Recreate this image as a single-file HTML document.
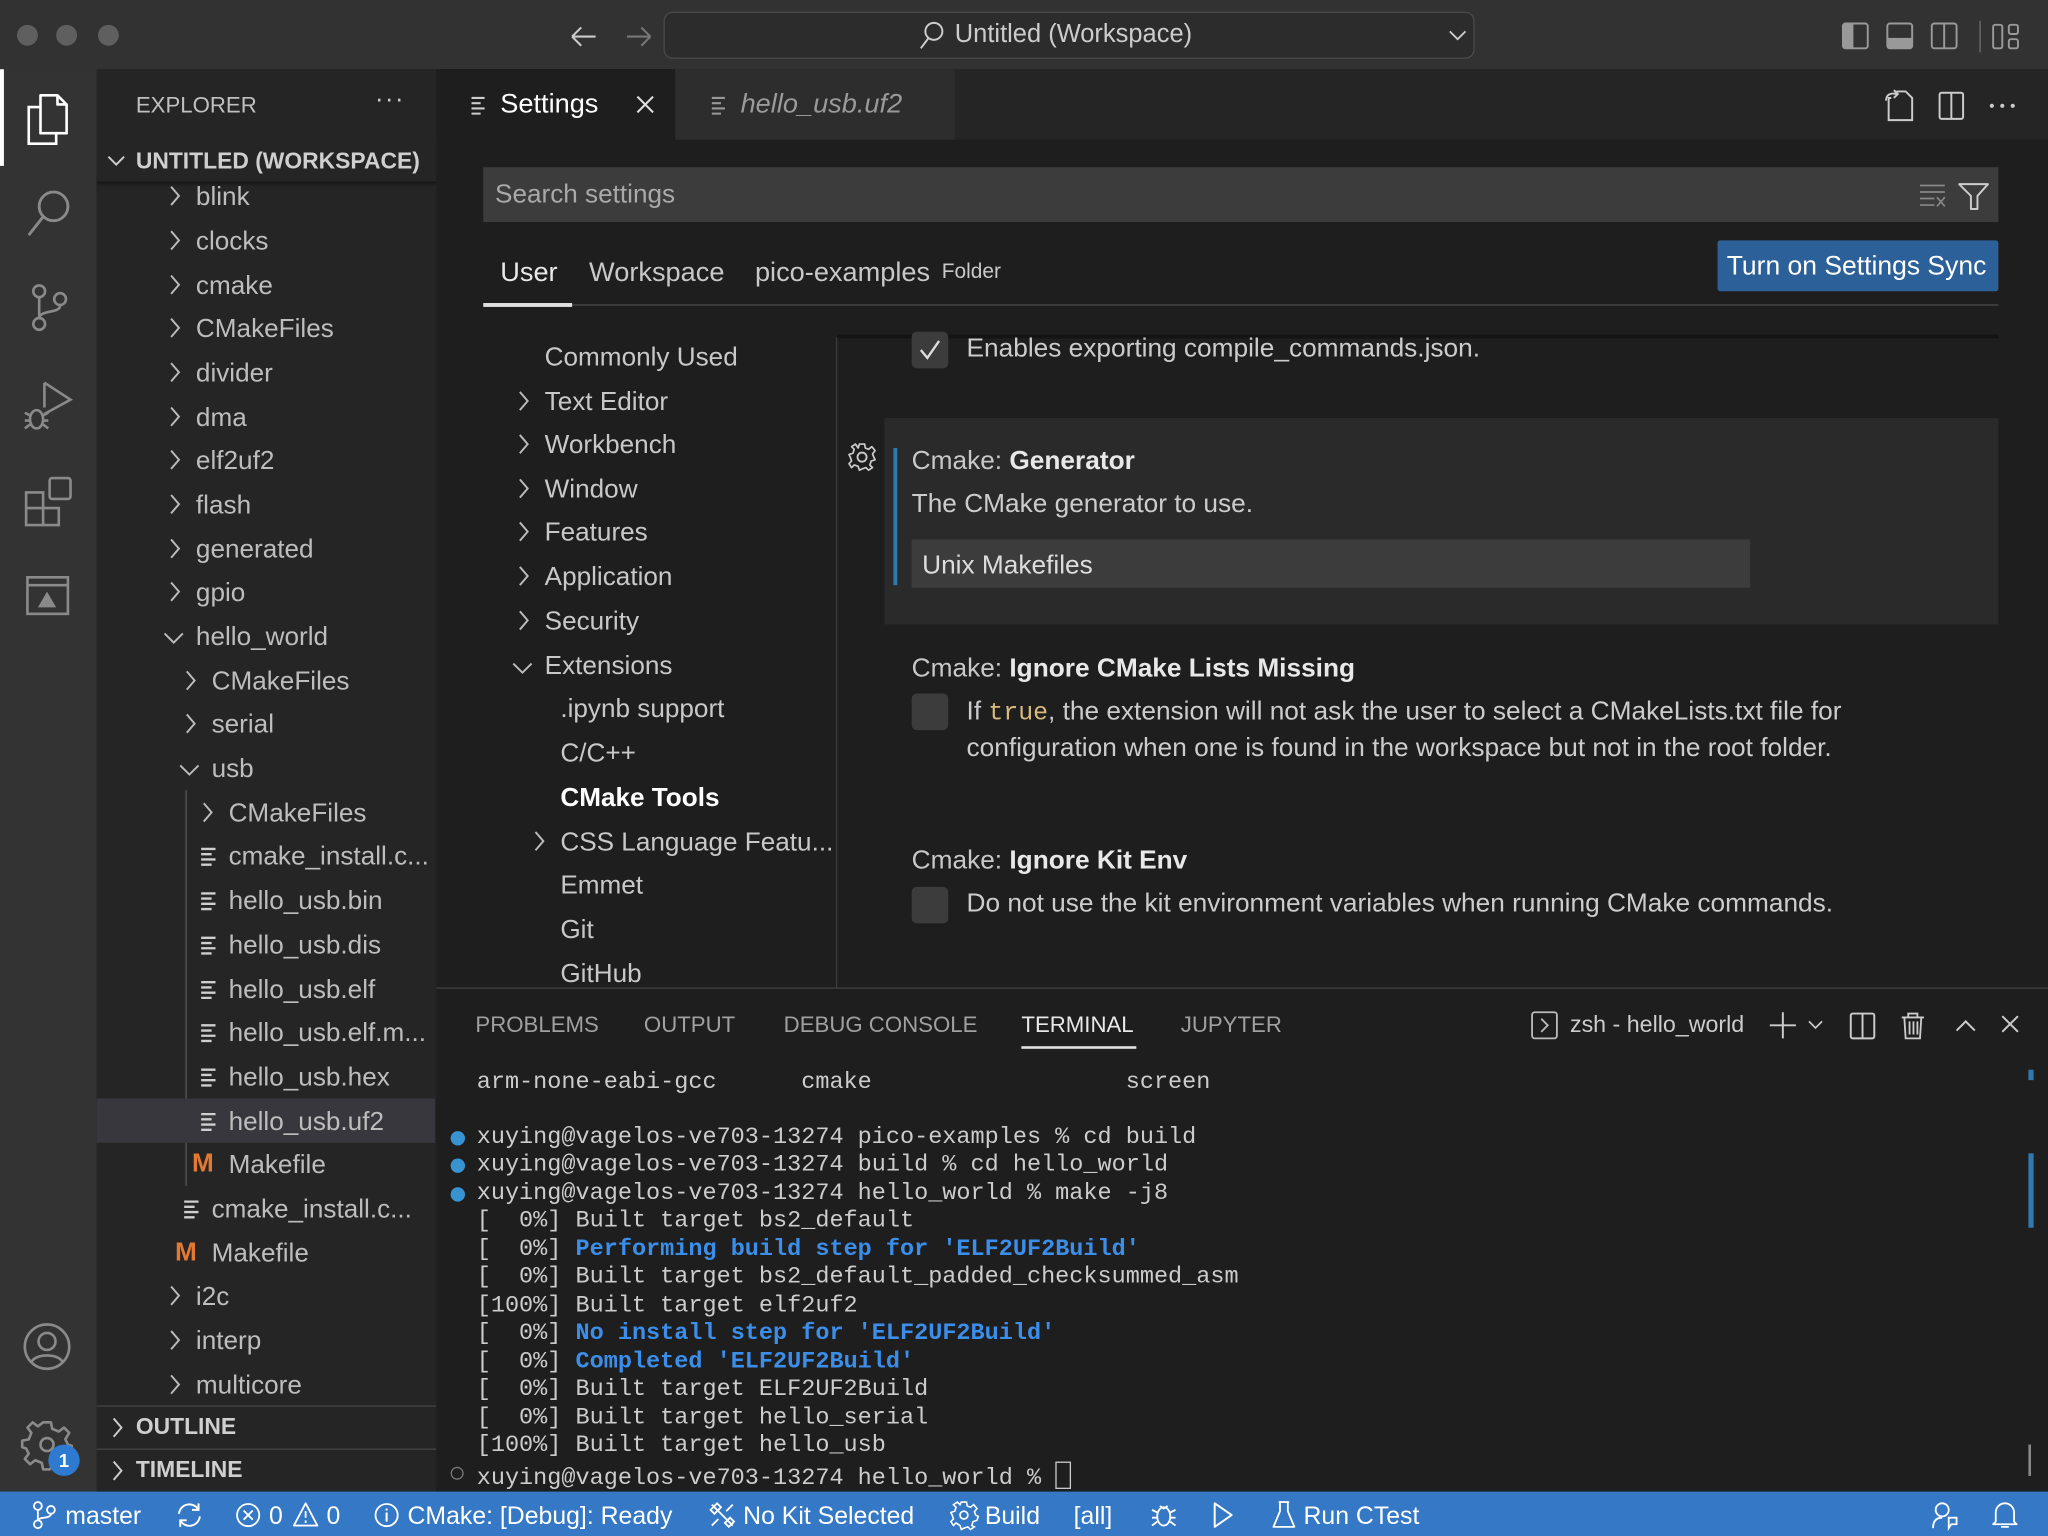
<!DOCTYPE html>
<html><head><meta charset="utf-8">
<style>
html,body{margin:0;padding:0;width:2048px;height:1536px;overflow:hidden;background:#1e1e1e;}
#w{position:absolute;left:0;top:0;width:1568px;height:1176px;transform:scale(1.306122);transform-origin:0 0;font-family:"Liberation Sans",sans-serif;color:#cccccc;background:#1e1e1e;overflow:hidden;}
.a{position:absolute;}
.t{position:absolute;white-space:nowrap;line-height:1;}
.row{position:absolute;left:74px;width:259px;height:33.7px;}
.row .tx{position:absolute;top:7px;font-size:20px;color:#bdbdbd;white-space:nowrap;}
.row svg{position:absolute;top:8px;}
.toc{position:absolute;font-size:20px;color:#c8c8c8;white-space:nowrap;}
.term{position:absolute;left:365px;font-family:"Liberation Mono",monospace;font-size:18px;color:#cccccc;white-space:pre;line-height:1;}
.b{color:#3b8eea;font-weight:bold;}
.sb{position:absolute;top:1151px;font-size:19px;color:#fff;white-space:nowrap;}
.st{font-size:20.1px !important;}
svg{overflow:visible;}
</style></head><body><div id="w">
<div class="a" style="left:0;top:0;width:1568px;height:53px;background:#323233;"></div>
<div class="a" style="left:13px;top:19px;width:16px;height:16px;border-radius:50%;background:#5f5f5f"></div>
<div class="a" style="left:43px;top:19px;width:16px;height:16px;border-radius:50%;background:#5f5f5f"></div>
<div class="a" style="left:75px;top:19px;width:16px;height:16px;border-radius:50%;background:#5f5f5f"></div>
<svg class="a" style="left:436px;top:18px" width="60" height="20"><path d="M2 10H20M2 10L9 3M2 10L9 17" stroke="#ccc" stroke-width="1.6" fill="none"/><path d="M44 10H62M62 10L55 3M62 10L55 17" stroke="#777" stroke-width="1.6" fill="none"/></svg>
<div class="a" style="left:508px;top:9px;width:619px;height:34px;border:1px solid #4a4a4a;border-radius:7px;background:#2c2c2d;"></div>
<svg class="a" style="left:702px;top:16px" width="22" height="22"><circle cx="13" cy="8" r="6.5" stroke="#ccc" stroke-width="1.5" fill="none"/><path d="M9 13L3 21" stroke="#ccc" stroke-width="1.5"/></svg>
<div class="t" style="left:731px;top:17px;font-size:19.5px;color:#ccc">Untitled (Workspace)</div>
<svg class="a" style="left:1109px;top:22px" width="14" height="10"><path d="M1 2L7 8L13 2" stroke="#ccc" stroke-width="1.4" fill="none"/></svg>
<svg class="a" style="left:1410px;top:16px" width="140" height="24"><rect x="1" y="2" width="19" height="19" rx="2" stroke="#999" stroke-width="1.5" fill="none"/><rect x="1" y="2" width="8" height="19" fill="#999"/><rect x="35" y="2" width="19" height="19" rx="2" stroke="#999" stroke-width="1.5" fill="none"/><rect x="35" y="13" width="19" height="8" fill="#999"/><rect x="69" y="2" width="19" height="19" rx="2" stroke="#999" stroke-width="1.5" fill="none"/><path d="M78.5 2V21" stroke="#999" stroke-width="1.5"/><path d="M106 0V24" stroke="#666" stroke-width="1.2"/><rect x="116" y="3" width="7" height="18" rx="1.5" stroke="#999" stroke-width="1.5" fill="none"/><rect x="128" y="3" width="7" height="7" rx="1.5" stroke="#999" stroke-width="1.5" fill="none"/><rect x="128" y="14" width="7" height="7" rx="1.5" stroke="#999" stroke-width="1.5" fill="none"/></svg>

<div class="a" style="left:0;top:53px;width:74px;height:1089px;background:#333333;"></div>
<div class="a" style="left:0;top:53px;width:3px;height:74px;background:#fff;"></div>
<svg class="a" style="left:18px;top:70px" width="40" height="40"><path d="M13 3H26L33 10V32H13Z M26 3V10H33" stroke="#fff" stroke-width="2" fill="none" stroke-linejoin="round"/><path d="M13 12H4V40H25V32" stroke="#fff" stroke-width="2" fill="none"/></svg>
<svg class="a" style="left:18px;top:143px" width="40" height="40"><circle cx="23" cy="15" r="11" stroke="#8a8a8a" stroke-width="2.2" fill="none"/><path d="M15 23L4 37" stroke="#8a8a8a" stroke-width="2.2"/></svg>
<svg class="a" style="left:18px;top:215px" width="40" height="42"><circle cx="12" cy="8" r="4.5" stroke="#8a8a8a" stroke-width="2" fill="none"/><circle cx="12" cy="33" r="4.5" stroke="#8a8a8a" stroke-width="2" fill="none"/><circle cx="28" cy="14" r="4.5" stroke="#8a8a8a" stroke-width="2" fill="none"/><path d="M12 13V28M28 19C28 25 14 22 12 28" stroke="#8a8a8a" stroke-width="2" fill="none"/></svg>
<svg class="a" style="left:16px;top:290px" width="42" height="42"><path d="M18 3V22M18 3L38 16L18 27" stroke="#8a8a8a" stroke-width="2" fill="none"/><ellipse cx="12" cy="31" rx="5" ry="7" stroke="#8a8a8a" stroke-width="2" fill="none"/><path d="M3 26L7 28M3 32H7M3 38L7 35M21 26L17 28M21 32H17M21 38L17 35" stroke="#8a8a8a" stroke-width="2"/></svg>
<svg class="a" style="left:18px;top:364px" width="42" height="42"><path d="M2 13H15V25H27V38H2Z M2 25H15V38" stroke="#8a8a8a" stroke-width="2" fill="none"/><rect x="20" y="2" width="16" height="16" rx="2" stroke="#8a8a8a" stroke-width="2" fill="none"/></svg>
<svg class="a" style="left:20px;top:440px" width="38" height="34"><rect x="1" y="2" width="31" height="28" stroke="#8a8a8a" stroke-width="2" fill="none"/><path d="M1 8H32" stroke="#8a8a8a" stroke-width="2"/><path d="M16 13L23 25H9Z" fill="#8a8a8a"/></svg>
<svg class="a" style="left:17px;top:1012px" width="40" height="40"><circle cx="19" cy="19" r="17" stroke="#8a8a8a" stroke-width="2" fill="none"/><circle cx="19" cy="15" r="6.5" stroke="#8a8a8a" stroke-width="2" fill="none"/><path d="M7 31C10 24 28 24 31 31" stroke="#8a8a8a" stroke-width="2" fill="none"/></svg>
<svg class="a" style="left:17px;top:1087px" width="40" height="40"><circle cx="19" cy="19" r="5" stroke="#8a8a8a" stroke-width="2" fill="none"/><path d="M16 2H22L23 7L28 9L32 6L36 10L33 15L35 19L38 20V25L33 26L31 30L34 34L30 38L26 35L22 37L21 38H16L15 33L10 31L6 34L2 30L5 26L3 22L0 21V16L5 15L7 10L4 6L8 2L12 5Z" stroke="#8a8a8a" stroke-width="2" fill="none" stroke-linejoin="round"/></svg>
<div class="a" style="left:37px;top:1106px;width:24px;height:24px;border-radius:50%;background:#2f7ad1;color:#fff;font-size:14px;font-weight:bold;text-align:center;line-height:24px;">1</div>

<div class="a" style="left:74px;top:53px;width:260px;height:1089px;background:#252526;"></div>
<div class="t" style="left:104px;top:72px;font-size:17px;color:#c0c0c0">EXPLORER</div>
<div class="t" style="left:287px;top:66px;font-size:20px;color:#ccc;letter-spacing:1px">···</div>
<svg class="a" style="left:82px;top:117px" width="14" height="12"><path d="M1 3L7 9L13 3" stroke="#ccc" stroke-width="1.5" fill="none"/></svg>
<div class="t" style="left:104px;top:115px;font-size:17.5px;font-weight:bold;color:#cfcfcf">UNTITLED (WORKSPACE)</div>
<div class="a" style="left:74px;top:139px;width:260px;height:4px;background:linear-gradient(#151515,rgba(0,0,0,0));"></div>
<div class="a" style="left:142px;top:605px;width:1px;height:303px;background:#585858"></div>

<div class="a" style="left:74px;top:1076px;width:260px;height:1px;background:#444"></div>
<div class="a" style="left:74px;top:1109px;width:260px;height:1px;background:#444"></div>
<svg class="a" style="left:85px;top:1085px" width="10" height="16"><path d="M2 1L8 8L2 15" stroke="#ccc" stroke-width="1.5" fill="none"/></svg>
<div class="t" style="left:104px;top:1084px;font-size:17.5px;font-weight:bold;color:#cfcfcf">OUTLINE</div>
<svg class="a" style="left:85px;top:1118px" width="10" height="16"><path d="M2 1L8 8L2 15" stroke="#ccc" stroke-width="1.5" fill="none"/></svg>
<div class="t" style="left:104px;top:1117px;font-size:17.5px;font-weight:bold;color:#cfcfcf">TIMELINE</div>

<div class="a" style="left:334px;top:53px;width:1234px;height:54px;background:#252526;"></div>
<div class="a" style="left:334px;top:53px;width:183px;height:54px;background:#1e1e1e;"></div>
<div class="a" style="left:517px;top:53px;width:214px;height:54px;background:#2d2d2d;"></div>
<svg class="a" style="left:360px;top:73px" width="14" height="14"><path d="M1 2H11M1 6H8M1 10H11M1 14H8" stroke="#ccc" stroke-width="1.6"/></svg>
<div class="t" style="left:383px;top:70px;font-size:20.8px;color:#fff">Settings</div>
<svg class="a" style="left:487px;top:73px" width="14" height="14"><path d="M1 1L13 13M13 1L1 13" stroke="#ddd" stroke-width="1.6"/></svg>
<svg class="a" style="left:544px;top:73px" width="14" height="14"><path d="M1 2H11M1 6H8M1 10H11M1 14H8" stroke="#999" stroke-width="1.6"/></svg>
<div class="t" style="left:567px;top:70px;font-size:20.8px;color:#9a9a9a;font-style:italic">hello_usb.uf2</div>
<svg class="a" style="left:1442px;top:68px" width="110" height="26"><path d="M6 7H4V24H22V7L17 2H10" stroke="#ccc" stroke-width="1.5" fill="none"/><path d="M2 9C2 4 6 3 10 4M8 1L11 4L8 7" stroke="#ccc" stroke-width="1.5" fill="none"/><rect x="43" y="3" width="18" height="20" rx="1.5" stroke="#ccc" stroke-width="1.5" fill="none"/><path d="M52 3V23" stroke="#ccc" stroke-width="1.5"/><circle cx="83" cy="13" r="1.6" fill="#ccc"/><circle cx="91" cy="13" r="1.6" fill="#ccc"/><circle cx="99" cy="13" r="1.6" fill="#ccc"/></svg>

<div class="a" style="left:370px;top:128px;width:1160px;height:42px;background:#3c3c3c;"></div>
<div class="t" style="left:379px;top:139px;font-size:20px;color:#a9a9a9">Search settings</div>
<svg class="a" style="left:1469px;top:139px" width="64" height="22"><path d="M1 3H20M1 8H20M1 13H12M1 18H12" stroke="#888" stroke-width="1.3"/><path d="M14 12L20 19M20 12L14 19" stroke="#888" stroke-width="1.3"/><path d="M31 2H53L45 11V21H40V11Z" stroke="#ccc" stroke-width="1.5" fill="none" stroke-linejoin="round"/></svg>

<div class="t" style="left:383px;top:199px;font-size:20.8px;color:#e8e8e8">User</div>
<div class="t" style="left:451px;top:199px;font-size:20.8px;color:#c8c8c8">Workspace</div>
<div class="t" style="left:578px;top:199px;font-size:20.8px;color:#c8c8c8">pico-examples</div>
<div class="t" style="left:721px;top:201px;font-size:16px;color:#c8c8c8">Folder</div>
<div class="a" style="left:1315px;top:184px;width:215px;height:39px;background:#2c6098;border-radius:2px;"></div>
<div class="t" style="left:1322px;top:194px;font-size:20.3px;color:#fff">Turn on Settings Sync</div>
<div class="a" style="left:370px;top:233px;width:1160px;height:1px;background:#4a4a4a"></div>
<div class="a" style="left:370px;top:232px;width:68px;height:3px;background:#e0e0e0"></div>

<div class="a" style="left:640px;top:258px;width:1px;height:498px;background:#3c3c3c"></div>

<div class="a" style="left:641px;top:256px;width:889px;height:3px;background:#141414"></div>
<div class="a" style="left:698px;top:254px;width:28px;height:28px;background:#3c3c3c;border-radius:4px"></div>
<svg class="a" style="left:702px;top:258px" width="20" height="20"><path d="M3 10L8 16L17 3" stroke="#ddd" stroke-width="1.8" fill="none"/></svg>
<div class="t st" style="left:740px;top:257px;color:#ccc">Enables exporting compile_commands.json.</div>

<div class="a" style="left:677px;top:320px;width:853px;height:158px;background:#2a2a2b"></div>
<div class="a" style="left:684px;top:343px;width:3px;height:105px;background:#2f78b0"></div>
<svg class="a" style="left:649px;top:339px" width="22" height="22"><circle cx="11" cy="11" r="3.5" stroke="#ccc" stroke-width="1.4" fill="none"/><path d="M9 1H13L13.5 4L16 5L18.5 3L21 6L19 8.5L20 11L21 13L18 14L17 17L19 19L16 21L14 19L11 20L9 21L8 18L5 17L3 19L1 16L3 14L2 11L1 9L4 8L5 5L3 3L6 1L8 4Z" stroke="#ccc" stroke-width="1.3" fill="none" stroke-linejoin="round"/></svg>
<div class="t st" style="left:698px;top:343px;color:#c8c8c8">Cmake: <b style="color:#e8e8e8">Generator</b></div>
<div class="t st" style="left:698px;top:376px;color:#ccc">The CMake generator to use.</div>
<div class="a" style="left:698px;top:413px;width:642px;height:37px;background:#3c3c3c"></div>
<div class="t st" style="left:706px;top:423px;color:#ddd">Unix Makefiles</div>

<div class="t st" style="left:698px;top:502px;color:#c8c8c8">Cmake: <b style="color:#e8e8e8">Ignore CMake Lists Missing</b></div>
<div class="a" style="left:698px;top:531px;width:28px;height:28px;background:#3c3c3c;border-radius:4px"></div>
<div class="t st" style="left:740px;top:535px;color:#ccc">If <span style="font-family:'Liberation Mono',monospace;color:#d7ba7d;font-size:19px">true</span>, the extension will not ask the user to select a CMakeLists.txt file for</div>
<div class="t st" style="left:740px;top:563px;color:#ccc">configuration when one is found in the workspace but not in the root folder.</div>
<div class="t st" style="left:698px;top:649px;color:#c8c8c8">Cmake: <b style="color:#e8e8e8">Ignore Kit Env</b></div>
<div class="a" style="left:698px;top:679px;width:28px;height:28px;background:#3c3c3c;border-radius:4px"></div>
<div class="t st" style="left:740px;top:682px;color:#ccc">Do not use the kit environment variables when running CMake commands.</div>

<div class="a" style="left:334px;top:756px;width:1234px;height:1px;background:#414141"></div>
<div class="t" style="left:364px;top:776px;font-size:17px;color:#a0a0a0">PROBLEMS</div>
<div class="t" style="left:493px;top:776px;font-size:17px;color:#a0a0a0">OUTPUT</div>
<div class="t" style="left:600px;top:776px;font-size:17px;color:#a0a0a0">DEBUG CONSOLE</div>
<div class="t" style="left:782px;top:776px;font-size:17px;color:#e8e8e8">TERMINAL</div>
<div class="a" style="left:782px;top:801px;width:88px;height:2px;background:#e0e0e0"></div>
<div class="t" style="left:904px;top:776px;font-size:17px;color:#a0a0a0">JUPYTER</div>
<svg class="a" style="left:1172px;top:774px" width="22" height="22"><rect x="1" y="1" width="19" height="20" rx="2" stroke="#bbb" stroke-width="1.4" fill="none"/><path d="M8 6L13 11L8 16" stroke="#bbb" stroke-width="1.4" fill="none"/></svg>
<div class="t" style="left:1202px;top:776px;font-size:17.8px;color:#ccc">zsh - hello_world</div>
<svg class="a" style="left:1354px;top:773px" width="200" height="24"><path d="M11 2V22M1 12H21" stroke="#ccc" stroke-width="1.5"/><path d="M31 9L36 14L41 9" stroke="#ccc" stroke-width="1.3" fill="none"/><rect x="63" y="3" width="18" height="19" rx="1.5" stroke="#ccc" stroke-width="1.5" fill="none"/><path d="M72 3V22" stroke="#ccc" stroke-width="1.5"/><path d="M102 6H119M107 6V3H114V6M104 6L105 22H116L117 6M108 9V19M111 9V19M114 9V19" stroke="#ccc" stroke-width="1.4" fill="none"/><path d="M144 16L151 9L158 16" stroke="#ccc" stroke-width="1.5" fill="none"/><path d="M179 5L191 17M191 5L179 17" stroke="#ccc" stroke-width="1.5"/></svg>

<div class="term" style="top:820px">arm-none-eabi-gcc      cmake                  screen</div>
<div class="a" style="left:1553px;top:819px;width:4px;height:8px;background:#2f78b0"></div>
<div class="a" style="left:1553px;top:883px;width:4px;height:57px;background:#2f78b0"></div>
<div class="a" style="left:1553px;top:1106px;width:2px;height:24px;background:#888"></div>

<div class="a" style="left:0;top:1142px;width:1568px;height:34px;background:#3478c6"></div>
<svg class="a" style="left:24px;top:1149px" width="20" height="22"><circle cx="5" cy="4" r="3" stroke="#fff" stroke-width="1.4" fill="none"/><circle cx="5" cy="18" r="3" stroke="#fff" stroke-width="1.4" fill="none"/><circle cx="15" cy="7" r="3" stroke="#fff" stroke-width="1.4" fill="none"/><path d="M5 7V15M15 10C15 14 6 12 5 15" stroke="#fff" stroke-width="1.4" fill="none"/></svg>
<div class="sb" style="left:50px">master</div>
<svg class="a" style="left:134px;top:1149px" width="22" height="22"><path d="M3 10A8 8 0 0 1 18 7M19 12A8 8 0 0 1 4 15M18 2V7H13M4 20V15H9" stroke="#fff" stroke-width="1.5" fill="none"/></svg>
<svg class="a" style="left:180px;top:1150px" width="22" height="22"><circle cx="10" cy="10" r="8.5" stroke="#fff" stroke-width="1.4" fill="none"/><path d="M6.5 6.5L13.5 13.5M13.5 6.5L6.5 13.5" stroke="#fff" stroke-width="1.4"/></svg>
<div class="sb" style="left:206px">0</div>
<svg class="a" style="left:224px;top:1149px" width="22" height="22"><path d="M10 2L19 19H1Z" stroke="#fff" stroke-width="1.4" fill="none" stroke-linejoin="round"/><path d="M10 8V13M10 15V17" stroke="#fff" stroke-width="1.4"/></svg>
<div class="sb" style="left:250px">0</div>
<svg class="a" style="left:286px;top:1150px" width="22" height="22"><circle cx="10" cy="10" r="8.5" stroke="#fff" stroke-width="1.4" fill="none"/><path d="M10 8V15M10 5V6.5" stroke="#fff" stroke-width="1.6"/></svg>
<div class="sb" style="left:312px">CMake: [Debug]: Ready</div>
<svg class="a" style="left:542px;top:1149px" width="22" height="22"><path d="M3 3L19 19M3 19L8 14M14 8L19 3M2 7L7 2L10 5L5 10ZM13 17L17 13L20 16L16 20Z" stroke="#fff" stroke-width="1.4" fill="none"/></svg>
<div class="sb" style="left:569px">No Kit Selected</div>
<svg class="a" style="left:728px;top:1149px" width="22" height="22"><circle cx="10" cy="11" r="3" stroke="#fff" stroke-width="1.3" fill="none"/><path d="M8 1H12L12.5 4L15 5L17.5 3L20 6L18 8.5L19 11L21 12L20 15L17 16L16 19L18 20L15 22L13 20L10 21L8 22L7 19L4 17L2 19L0 16L2 14L1 11L0 9L3 8L4 5L2 3L5 1L7 3Z" stroke="#fff" stroke-width="1.2" fill="none"/></svg>
<div class="sb" style="left:754px">Build</div>
<div class="sb" style="left:822px">[all]</div>
<svg class="a" style="left:880px;top:1149px" width="22" height="22"><ellipse cx="11" cy="12" rx="5" ry="7" stroke="#fff" stroke-width="1.4" fill="none"/><path d="M2 7L6 9M2 13H6M2 19L6 16M20 7L16 9M20 13H16M20 19L16 16M8 4L11 6L14 4" stroke="#fff" stroke-width="1.4" fill="none"/></svg>
<svg class="a" style="left:928px;top:1149px" width="18" height="22"><path d="M2 2L15 11L2 20Z" stroke="#fff" stroke-width="1.5" fill="none" stroke-linejoin="round"/></svg>
<svg class="a" style="left:974px;top:1148px" width="18" height="24"><path d="M5 2H13M6 2V9L1 21H17L12 9V2" stroke="#fff" stroke-width="1.4" fill="none" stroke-linejoin="round"/></svg>
<div class="sb" style="left:998px">Run CTest</div>
<svg class="a" style="left:1478px;top:1148px" width="22" height="24"><circle cx="9" cy="8" r="5" stroke="#fff" stroke-width="1.4" fill="none"/><path d="M2 22C2 15 6 14 9 14M14 14H20V19H16L14 22Z" stroke="#fff" stroke-width="1.4" fill="none"/></svg>
<svg class="a" style="left:1524px;top:1148px" width="22" height="24"><path d="M4 17V10A7 7 0 0 1 18 10V17L20 19H2Z M8 21H14" stroke="#fff" stroke-width="1.4" fill="none" stroke-linejoin="round"/></svg>

<script>
(function(){
var W=document.getElementById('w');
function add(h){W.insertAdjacentHTML('beforeend',h);}
var chevR='<path d="M2 1L8 8L2 15" stroke="#bbb" stroke-width="1.5" fill="none"/>';
var chevD='<path d="M1 4L8 11L15 4" stroke="#bbb" stroke-width="1.5" fill="none"/>';
var file='<path d="M1 2H12M1 6H9M1 10H12M1 14H9" stroke="#cfcfcf" stroke-width="1.8"/>';
var rows=[[150,1,'r','blink'],[184,1,'r','clocks'],[218,1,'r','cmake'],[251,1,'r','CMakeFiles'],[285,1,'r','divider'],[319,1,'r','dma'],[352,1,'r','elf2uf2'],[386,1,'r','flash'],[420,1,'r','generated'],[453,1,'r','gpio'],[487,1,'d','hello_world'],[521,2,'r','CMakeFiles'],[554,2,'r','serial'],[588,2,'d','usb'],[622,3,'r','CMakeFiles'],[655,3,'f','cmake_install.c...'],[689,3,'f','hello_usb.bin'],[723,3,'f','hello_usb.dis'],[757,3,'f','hello_usb.elf'],[790,3,'f','hello_usb.elf.m...'],[824,3,'f','hello_usb.hex'],[858,3,'f','hello_usb.uf2'],[891,3,'m','Makefile'],[925,2,'f','cmake_install.c...'],[959,2,'m','Makefile'],[992,1,'r','i2c'],[1026,1,'r','interp'],[1060,1,'r','multicore']];
var h='';
rows.forEach(function(r){
 var y=r[0]-16.8,l=r[1],tx=[0,150,162,175][l],cx=[0,129,141,154][l];
 var bg=(r[3]=='hello_usb.uf2')?'background:#37373d;':'';
 var ic='';
 if(r[2]=='r')ic='<svg style="left:'+(cx-74)+'px;top:9px" width="10" height="16">'+chevR+'</svg>';
 else if(r[2]=='d')ic='<svg style="left:'+(cx-78)+'px;top:11px" width="16" height="12">'+chevD+'</svg>';
 else if(r[2]=='f')ic='<svg style="left:'+(tx-22-74)+'px;top:10px" width="14" height="16">'+file+'</svg>';
 else ic='<div style="position:absolute;left:'+(tx-28-74)+'px;top:6px;font-size:20px;font-weight:bold;color:#e37933">M</div>';
 h+='<div class="row" style="top:'+y+'px;'+bg+'">'+ic+'<div class="tx" style="left:'+(tx-74)+'px">'+r[3]+'</div></div>';
});
add(h);
var toc=[[273,417,'','Commonly Used'],[307,417,'r','Text Editor'],[340,417,'r','Workbench'],[374,417,'r','Window'],[407,417,'r','Features'],[441,417,'r','Application'],[475,417,'r','Security'],[509,417,'d','Extensions'],[542,429,'','.ipynb support'],[576,429,'','C/C++'],[610,429,'b','CMake Tools'],[644,429,'r','CSS Language Featu...'],[677,429,'',"Emmet"],[711,429,'','Git'],[745,429,'','GitHub']];
h='';
toc.forEach(function(t){
 var y=t[0]-10;
 if(t[2]=='r')h+='<svg class="a" style="left:'+(t[1]-21)+'px;top:'+(t[0]-8)+'px" width="10" height="16">'+chevR+'</svg>';
 if(t[2]=='d')h+='<svg class="a" style="left:'+(t[1]-25)+'px;top:'+(t[0]-5)+'px" width="16" height="12">'+chevD+'</svg>';
 h+='<div class="toc" style="left:'+t[1]+'px;top:'+y+'px;'+(t[2]=='b'?'font-weight:bold;color:#fff;':'')+'">'+t[3]+'</div>';
});
add(h);
var L=[
['p','xuying@vagelos-ve703-13274 pico-examples % cd build'],
['p','xuying@vagelos-ve703-13274 build % cd hello_world'],
['p','xuying@vagelos-ve703-13274 hello_world % make -j8'],
['','[  0%] Built target bs2_default'],
['b','[  0%] |Performing build step for \'ELF2UF2Build\''],
['','[  0%] Built target bs2_default_padded_checksummed_asm'],
['','[100%] Built target elf2uf2'],
['b','[  0%] |No install step for \'ELF2UF2Build\''],
['b','[  0%] |Completed \'ELF2UF2Build\''],
['','[  0%] Built target ELF2UF2Build'],
['','[  0%] Built target hello_serial'],
['','[100%] Built target hello_usb'],
['o','xuying@vagelos-ve703-13274 hello_world % ']];
h='';
L.forEach(function(l,i){
 var y=862+i*21.45;
 var s=l[1];
 if(l[0]=='b'){var p=s.split('|');s=p[0]+'<span class="b">'+p[1]+'</span>';}
 if(l[0]=='p')h+='<div class="a" style="left:345px;top:'+(y+4)+'px;width:11px;height:11px;border-radius:50%;background:#3794d1"></div>';
 if(l[0]=='o'){h+='<div class="a" style="left:345px;top:'+(y+4)+'px;width:8px;height:8px;border-radius:50%;border:1.5px solid #777"></div>';s+='<span style="display:inline-block;width:10px;height:19px;border:1px solid #ccc;vertical-align:-4px"></span>';}
 h+='<div class="term" style="top:'+y+'px">'+s+'</div>';
});
add(h);
})();
</script>
</div></body></html>
